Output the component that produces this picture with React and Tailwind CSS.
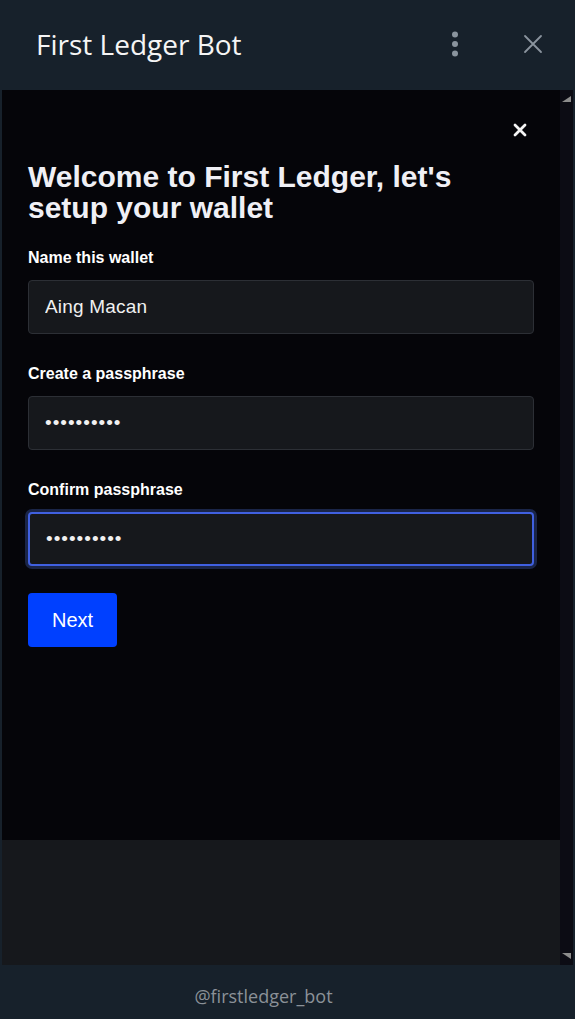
import React from "react";

const Field = ({ label, type = "text", value, focused }) => (
	<div className="flex flex-col">
		<label className="text-[16px] font-bold leading-5 text-white">{label}</label>
		<input
			type={type}
			defaultValue={value}
			readOnly
			className={`mt-[12px] h-[54px] w-full rounded-[4px] bg-[#16181c] px-[16px] font-['Liberation_Sans',Arial,sans-serif] text-[19px] text-[#f0f0f0] outline-none ${
				type === "password" ? "tracking-[1px]" : "tracking-[0.2px]"
			} ${
				focused
					? "border-2 border-[#4060e0] px-[15px] shadow-[0_0_0_3px_#1a2548]"
					: "border border-[#2c2f35]"
			}`}
		/>
	</div>
);

const App = () => {
	return (
		<div className="flex h-[1019px] w-[575px] flex-col bg-[#17212b] font-['Liberation_Sans',Arial,sans-serif]">
			{/* Header */}
			<div className="flex h-[90px] items-center pb-[2px] pl-[36px] pr-[32px]">
				<h1 className="flex-1 font-['Open_Sans',sans-serif] text-[28px] text-[#f5f5f5]">
					First Ledger Bot
				</h1>
				<svg className="mr-[64px] h-[26px] w-[8px]" viewBox="0 0 8 26" fill="#8a949e">
					<circle cx="4" cy="3.5" r="3" />
					<circle cx="4" cy="13" r="3" />
					<circle cx="4" cy="22.5" r="3" />
				</svg>
				<svg className="h-[20px] w-[20px]" viewBox="0 0 20 20" stroke="#8a949e" strokeWidth="1.8" strokeLinecap="round">
					<path d="M2 2L18 18M18 2L2 18" />
				</svg>
			</div>

			{/* Body */}
			<div className="flex flex-1 pl-[2px]">
				<div className="flex flex-1 flex-col">
					<div className="flex flex-1 flex-col bg-[#050509] px-[26px]">
						<div className="flex justify-end pr-[7px] pt-[33px]">
							<svg className="h-[14px] w-[14px]" viewBox="0 0 14 14" stroke="#f5f5f5" strokeWidth="2.8" strokeLinecap="round">
								<path d="M2 2L12 12M12 2L2 12" />
							</svg>
						</div>
						<h2 className="mt-[24px] text-[30px] font-bold leading-[31px] text-[#f0f0f5]">
							Welcome to First Ledger, let's setup your wallet
						</h2>
						<div className="mt-[25px] flex flex-col gap-[30px]">
							<Field label="Name this wallet" value="Aing Macan" />
							<Field label="Create a passphrase" type="password" value="xxxxxxxxxx" />
							<Field label="Confirm passphrase" type="password" value="xxxxxxxxxx" focused />
						</div>
						<div className="mt-[27px]">
							<button className="h-[54px] w-[89px] rounded-[4px] bg-[#0040ff] text-[20px] text-white">
								Next
							</button>
						</div>
					</div>
					<div className="h-[125px] bg-[#16181c]" />
				</div>
				{/* Scrollbar */}
				<div className="flex w-[13px] flex-col items-center justify-between bg-[#0c0c14] py-[6px]">
					<svg className="h-[6px] w-[9px]" viewBox="0 0 9 6" fill="#8c8c8c">
						<path d="M9 0L9 6L0 6Z" />
					</svg>
					<svg className="h-[6px] w-[9px]" viewBox="0 0 9 6" fill="#8c8c8c">
						<path d="M0 0L9 0L9 6Z" />
					</svg>
				</div>
				<div className="w-[2px] bg-[#17212b]" />
			</div>

			{/* Footer */}
			<div className="flex h-[54px] items-center justify-center pr-[48px] pt-[8px] font-['Open_Sans',sans-serif] text-[18px] text-[#8b9198]">
				@firstledger_bot
			</div>
		</div>
	);
};

export default App;
